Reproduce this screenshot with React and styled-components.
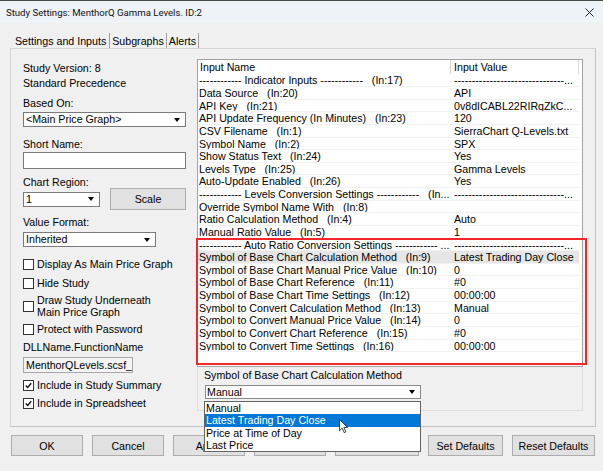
import React from 'react';
import styled, { createGlobalStyle } from 'styled-components';

const GlobalStyle = createGlobalStyle`
  html, body { margin: 0; padding: 0; background: #f0f0f0; }
  body { font-family: "Liberation Sans", Arial, sans-serif; font-size: 10.67px; color: #000; }
  * { box-sizing: border-box; }
`;

const Window = styled.div`
  position: relative;
  width: 603px;
  height: 471px;
  overflow: hidden;
  background: #f0f0f0;
  border-top: 1px solid #4a4a4a;
  display: flex;
  flex-direction: column;
`;

const TitleBar = styled.div`
  height: 22px;
  flex: 0 0 22px;
  background: #eef3f8;
  display: flex;
  align-items: center;
  justify-content: space-between;
  padding: 0 9px 0 6px;
`;

const Title = styled.span`
  font-family: Roboto, "Noto Sans", sans-serif;
  font-size: 9.6px;
  font-weight: 400;
  color: #111;
`;

const TabStrip = styled.div`
  display: flex;
  margin-top: 10px;
  padding-left: 12px;
  height: 15px;
`;

const Tab = styled.div`
  height: 15px;
  line-height: 13px;
  padding: 2px ${p => (p.$active ? '3px' : '2px')} 0;
  border-right: 1px solid #a0a0a0;
  white-space: nowrap;
`;

const Panel = styled.div`
  display: flex;
  margin: 0 7px 0 10px;
  height: 379px;
  border: 1px solid #d4d4d4;
  border-right-color: #c4c4c4;
  border-bottom-color: #c4c4c4;
`;

const LeftCol = styled.div`
  flex: 0 0 186px;
  display: flex;
  flex-direction: column;
  padding: 12.5px 11px 0 12px;
`;

const Text = styled.div`
  line-height: 13px;
  margin-top: ${p => p.$mt || 0}px;
  white-space: nowrap;
`;

const Select = styled.div`
  position: relative;
  height: 15px;
  width: ${p => p.$w}px;
  margin-top: ${p => p.$mt || 0}px;
  background: #fff;
  border: 1px solid #7a7a7a;
  line-height: 13px;
  padding-left: 2px;
  white-space: nowrap;
  &::after {
    content: '';
    position: absolute;
    right: 5px;
    top: 4.5px;
    border-left: 3.5px solid transparent;
    border-right: 3.5px solid transparent;
    border-top: 4px solid #000;
  }
`;

const TextInput = styled.div`
  height: ${p => p.$h}px;
  width: ${p => p.$w}px;
  margin-top: ${p => p.$mt || 0}px;
  background: ${p => (p.$readonly ? '#f4f4f4' : '#fff')};
  border: 1px solid ${p => (p.$readonly ? '#a8a8a8' : '#7a7a7a')};
  line-height: ${p => p.$h - 2}px;
  padding-left: 2px;
  white-space: nowrap;
  overflow: hidden;
`;

const RegionRow = styled.div`
  display: flex;
  align-items: center;
  justify-content: space-between;
  height: 22px;
  margin-top: -0.5px;
`;

const Button = styled.div`
  width: ${p => p.$w}px;
  height: ${p => p.$h || 21}px;
  flex: 0 0 auto;
  background: #e1e1e1;
  border: 1px solid #adadad;
  display: flex;
  align-items: center;
  justify-content: center;
  white-space: nowrap;
`;

const CheckRow = styled.div`
  display: flex;
  align-items: center;
  gap: 3px;
  margin-top: ${p => p.$mt || 0}px;
  line-height: ${p => p.$lh || 13}px;
`;

const Box = styled.div`
  width: 11px;
  height: 11px;
  flex: 0 0 11px;
  background: #fff;
  border: 1px solid #333;
  display: flex;
  align-items: center;
  justify-content: center;
`;

const RightCol = styled.div`
  flex: 0 0 386px;
  display: flex;
  flex-direction: column;
  padding-top: 10px;
`;

const ListBox = styled.div`
  height: 308px;
  background: #fff;
  border: 1px solid #a3a3a3;
  overflow: hidden;
`;

const HeaderRow = styled.div`
  display: flex;
  height: 14.4px;
`;

const HeadCell = styled.div`
  width: ${p => p.$w}px;
  line-height: 14px;
  padding-left: ${p => p.$pl}px;
  border-right: 1px solid #d8d8d8;
  white-space: nowrap;
`;

const Row = styled.div`
  display: flex;
  height: 12.63px;
`;

const Cell = styled.div`
  width: ${p => p.$w}px;
  height: 12.63px;
  line-height: 12px;
  padding-left: ${p => p.$pl}px;
  white-space: pre;
  overflow: hidden;
  text-overflow: ellipsis;
  border-bottom: 1px solid #f1f1f1;
  background: ${p => (p.$sel ? '#e6e6e6' : 'transparent')};
`;

const ComboFrame = styled.div`
  height: 44px;
  border: 1px solid #dedede;
  border-top: none;
  padding: 1.5px 0 0 6px;
`;

const ComboLabel = styled.div`
  line-height: 13px;
  white-space: nowrap;
`;

const Combo = styled(Select)`
  margin-left: 1px;
  height: 14.5px;
  border-color: #8a8a8a;
  line-height: 12.5px;
  padding-left: 1px;
`;

const ButtonRow = styled.div`
  display: flex;
  gap: 9px;
  margin-top: 8px;
  padding-left: 11px;
`;

const DropList = styled.div`
  position: absolute;
  left: 204px;
  top: 400px;
  width: 217px;
  background: #fff;
  border: 1px solid #646464;
`;

const DropItem = styled.div`
  height: 12.3px;
  line-height: 12.3px;
  padding-left: 1px;
  white-space: nowrap;
  background: ${p => (p.$hl ? '#0078d7' : '#fff')};
  color: ${p => (p.$hl ? '#fff' : '#000')};
`;

const RedBox = styled.div`
  position: absolute;
  left: 196px;
  top: 237px;
  width: 391px;
  height: 127px;
  border: 2.5px solid #f4262a;
  pointer-events: none;
`;

const Cursor = styled.svg`
  position: absolute;
  left: 339px;
  top: 418px;
`;

const CloseIcon = () => (
  <svg width="9" height="9" viewBox="0 0 9 9">
    <path d="M0.5 0.5 L8.5 8.5 M8.5 0.5 L0.5 8.5" stroke="#222" strokeWidth="1" fill="none" />
  </svg>
);

const Tick = () => (
  <svg width="7" height="7" viewBox="0 0 7 7">
    <path d="M0.8 3.4 L2.7 5.4 L6.2 1.2" stroke="#111" strokeWidth="1.4" fill="none" />
  </svg>
);

const Check = ({ checked, children, mt, lh }) => (
  <CheckRow $mt={mt} $lh={lh}>
    <Box>{checked && <Tick />}</Box>
    <div>{children}</div>
  </CheckRow>
);

const D = '------------';
const rows = [
  [`${D} Indicator Inputs ${D}   (In:17)`, '-------------------------------...'],
  ['Data Source   (In:20)', 'API'],
  ['API Key   (In:21)', '0v8dICABL22RIRqZkC...'],
  ['API Update Frequency (In Minutes)   (In:23)', '120'],
  ['CSV Filename   (In:1)', 'SierraChart Q-Levels.txt'],
  ['Symbol Name   (In:2)', 'SPX'],
  ['Show Status Text   (In:24)', 'Yes'],
  ['Levels Type   (In:25)', 'Gamma Levels'],
  ['Auto-Update Enabled   (In:26)', 'Yes'],
  [`${D} Levels Conversion Settings ${D}   (In...`, '-------------------------------...'],
  ['Override Symbol Name With   (In:8)', ''],
  ['Ratio Calculation Method   (In:4)', 'Auto'],
  ['Manual Ratio Value   (In:5)', '1'],
  [`${D} Auto Ratio Conversion Settings ${D} ...`, '-------------------------------...'],
  ['Symbol of Base Chart Calculation Method   (In:9)', 'Latest Trading Day Close'],
  ['Symbol of Base Chart Manual Price Value   (In:10)', '0'],
  ['Symbol of Base Chart Reference   (In:11)', '#0'],
  ['Symbol of Base Chart Time Settings   (In:12)', '00:00:00'],
  ['Symbol to Convert Calculation Method   (In:13)', 'Manual'],
  ['Symbol to Convert Manual Price Value   (In:14)', '0'],
  ['Symbol to Convert Chart Reference   (In:15)', '#0'],
  ['Symbol to Convert Time Settings   (In:16)', '00:00:00'],
];

const buttons = [
  ['OK', 72],
  ['Cancel', 72],
  ['Apply', 72],
  ['Save', 72],
  ['Apply to All', 84],
  ['Set Defaults', 75],
  ['Reset Defaults', 83],
];

export default function App() {
  return (
    <>
      <GlobalStyle />
      <Window>
        <TitleBar>
          <Title>Study Settings: MenthorQ Gamma Levels. ID:2</Title>
          <CloseIcon />
        </TitleBar>
        <TabStrip>
          <Tab $active>Settings and Inputs</Tab>
          <Tab>Subgraphs</Tab>
          <Tab>Alerts</Tab>
        </TabStrip>
        <Panel>
          <LeftCol>
            <Text>Study Version: 8</Text>
            <Text $mt={2}>Standard Precedence</Text>
            <Text $mt={7}>Based On:</Text>
            <Select $w={163} $mt={2.5}>&lt;Main Price Graph&gt;</Select>
            <Text $mt={10.5}>Short Name:</Text>
            <TextInput $w={163} $h={17} $mt={1.5} />
            <Text $mt={6.5}>Chart Region:</Text>
            <RegionRow>
              <Select $w={77}>1</Select>
              <Button $w={76} $h={22}>Scale</Button>
            </RegionRow>
            <Text $mt={5.5}>Value Format:</Text>
            <Select $w={133} $mt={3.5}>Inherited</Select>
            <Check mt={10.5}>Display As Main Price Graph</Check>
            <Check mt={6}>Hide Study</Check>
            <Check mt={4.5} lh={12}>
              Draw Study Underneath
              <br />
              Main Price Graph
            </Check>
            <Check mt={4.5}>Protect with Password</Check>
            <Text $mt={5}>DLLName.FunctionName</Text>
            <TextInput $w={110} $h={16} $mt={3.5} $readonly>
              MenthorQLevels.scsf_
            </TextInput>
            <Check mt={5.5} checked>Include in Study Summary</Check>
            <Check mt={5} checked>Include in Spreadsheet</Check>
          </LeftCol>
          <RightCol>
            <ListBox>
              <HeaderRow>
                <HeadCell $w={253} $pl={2}>Input Name</HeadCell>
                <HeadCell $w={128} $pl={3}>Input Value</HeadCell>
              </HeaderRow>
              {rows.map(([n, v], i) => (
                <Row key={i}>
                  <Cell $w={253} $pl={1} $sel={i === 14}>{n}</Cell>
                  <Cell $w={128} $pl={3} $sel={i === 14}>{v}</Cell>
                </Row>
              ))}
            </ListBox>
            <ComboFrame>
              <ComboLabel>Symbol of Base Chart Calculation Method</ComboLabel>
              <Combo $w={216} $mt={3}>Manual</Combo>
            </ComboFrame>
          </RightCol>
        </Panel>
        <ButtonRow>
          {buttons.map(([label, w]) => (
            <Button key={label} $w={w}>{label}</Button>
          ))}
        </ButtonRow>
        <RedBox />
        <DropList>
          <DropItem>Manual</DropItem>
          <DropItem $hl>Latest Trading Day Close</DropItem>
          <DropItem>Price at Time of Day</DropItem>
          <DropItem>Last Price</DropItem>
        </DropList>
        <Cursor width="9" height="14" viewBox="0 0 12 19">
          <path d="M0.5 0.5 L0.5 16 L4.2 12.4 L7 18.5 L9.2 17.5 L6.5 11.5 L11.5 11.5 Z" fill="#fff" stroke="#000" strokeWidth="1" />
        </Cursor>
      </Window>
    </>
  );
}
